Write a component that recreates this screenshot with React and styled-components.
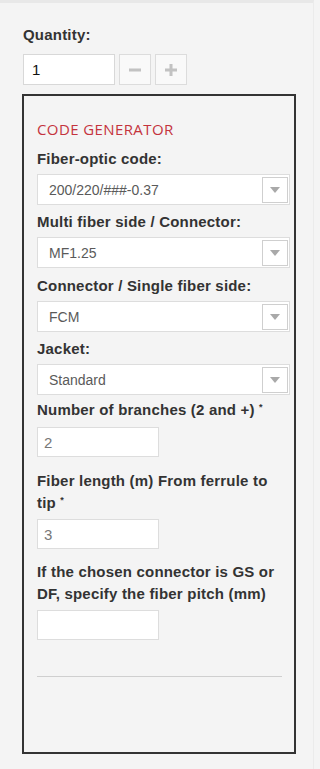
import React from 'react';
import styled, { createGlobalStyle } from 'styled-components';

const GlobalStyle = createGlobalStyle`
  body {
    margin: 0;
    background: #f4f4f4;
    font-family: "Liberation Sans", Arial, Helvetica, sans-serif;
  }
`;

const Page = styled.div`
  box-sizing: border-box;
  width: 314px;
  min-height: 769px;
  border-top: 3px solid #e8e8e8;
  border-right: 1px solid #ebebeb;
  padding: 21px 0 0 22px;
`;

const QtyLabel = styled.div`
  margin: 0 0 8px 1px;
  font-size: 15px;
  font-weight: 700;
  line-height: 22px;
  letter-spacing: 0.2px;
  color: #333;
`;

const QtyRow = styled.div`
  display: flex;
  gap: 4px;
  margin-left: 1px;
  height: 31px;
`;

const QtyInput = styled.input`
  box-sizing: border-box;
  width: 92px;
  height: 31px;
  padding: 0 8px;
  border: 1px solid #d8d8d8;
  background: #fff;
  font-family: inherit;
  font-size: 15px;
  color: #111;
  outline: none;
`;

const StepButton = styled.button`
  box-sizing: border-box;
  width: 32px;
  height: 31px;
  padding: 0;
  border: 1px solid #dcdcdc;
  background: #f9f9f9;
  display: flex;
  align-items: center;
  justify-content: center;
`;

const Box = styled.div`
  box-sizing: border-box;
  margin-top: 9px;
  width: 274px;
  height: 660px;
  border: 2px solid #333;
  padding: 23px 4px 0 13px;
`;

const Heading = styled.h3`
  margin: 0;
  font-family: "Open Sans", "Liberation Sans", sans-serif;
  font-size: 15px;
  font-weight: 400;
  line-height: 20px;
  letter-spacing: 0.4px;
  text-transform: uppercase;
  color: #c4333d;
`;

const Label = styled.div`
  margin-top: ${p => p.$mt}px;
  margin-bottom: ${p => p.$mb}px;
  font-size: 15px;
  font-weight: 700;
  line-height: 22px;
  letter-spacing: 0.2px;
  color: #333;
`;

const Star = styled.sup`
  font-size: 9px;
  line-height: 0;
  vertical-align: 5px;
`;

const SelectBox = styled.div`
  box-sizing: border-box;
  height: 31px;
  border: 1px solid #dddddd;
  background: #fff;
  display: flex;
  align-items: center;
  justify-content: space-between;
  padding: 0 1px 0 11px;
  font-size: 14px;
  color: #5a5a5a;
`;

const ArrowBox = styled.span`
  box-sizing: border-box;
  width: 26px;
  height: 26px;
  border: 1px solid #cfcfcf;
  background: #fff;
  display: flex;
  align-items: center;
  justify-content: center;
`;

const TextInput = styled.input`
  box-sizing: border-box;
  display: block;
  width: 122px;
  height: 30px;
  padding: 0 6px;
  border: 1px solid #dddddd;
  background: #fff;
  font-family: inherit;
  font-size: 15px;
  color: #777;
  outline: none;
`;

const Divider = styled.hr`
  margin: 36px 0 0;
  width: 245px;
  border: 0;
  border-top: 1px solid #cfcfcf;
`;

const Minus = () => (
  <svg width="12" height="12" viewBox="0 0 12 12">
    <rect x="0" y="4.5" width="12" height="3" fill="#c2c2c2" />
  </svg>
);

const Plus = () => (
  <svg width="12" height="12" viewBox="0 0 12 12">
    <rect x="0" y="4.5" width="12" height="3" fill="#c2c2c2" />
    <rect x="4.5" y="0" width="3" height="12" fill="#c2c2c2" />
  </svg>
);

const Select = ({ value }) => (
  <SelectBox>
    <span>{value}</span>
    <ArrowBox>
      <svg width="10" height="6" viewBox="0 0 10 6">
        <path d="M0 0 L10 0 L5 6 Z" fill="#a9a9a9" />
      </svg>
    </ArrowBox>
  </SelectBox>
);

const selects = [
  { label: 'Fiber-optic code:', value: '200/220/###-0.37', mt: 9 },
  { label: 'Multi fiber side / Connector:', value: 'MF1.25', mt: 6 },
  { label: 'Connector / Single fiber side:', value: 'FCM', mt: 7 },
  { label: 'Jacket:', value: 'Standard', mt: 6 },
];

export default function App() {
  return (
    <>
      <GlobalStyle />
      <Page>
        <QtyLabel>Quantity:</QtyLabel>
        <QtyRow>
          <QtyInput defaultValue="1" />
          <StepButton aria-label="minus"><Minus /></StepButton>
          <StepButton aria-label="plus"><Plus /></StepButton>
        </QtyRow>
        <Box>
          <Heading>Code Generator</Heading>
          {selects.map(s => (
            <React.Fragment key={s.label}>
              <Label $mt={s.mt} $mb={4}>{s.label}</Label>
              <Select value={s.value} />
            </React.Fragment>
          ))}
          <Label $mt={4} $mb={6}>
            Number of branches (2 and +) <Star>*</Star>
          </Label>
          <TextInput defaultValue="2" />
          <Label $mt={13} $mb={5}>
            Fiber length (m) From ferrule to tip <Star>*</Star>
          </Label>
          <TextInput defaultValue="3" />
          <Label $mt={12} $mb={5}>
            If the chosen connector is GS or DF, specify the fiber pitch (mm)
          </Label>
          <TextInput defaultValue="" />
          <Divider />
        </Box>
      </Page>
    </>
  );
}
